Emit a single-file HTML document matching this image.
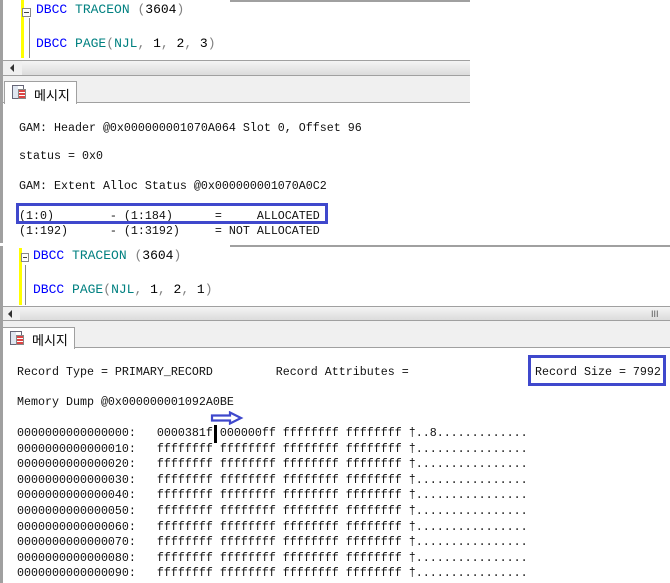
<!DOCTYPE html>
<html><head><meta charset="utf-8"><style>
*{margin:0;padding:0;box-sizing:border-box}
body{width:670px;height:583px;overflow:hidden;background:#fff;position:relative;font-family:"Liberation Mono",monospace}
.a{position:absolute;white-space:pre}
.code{font-size:13px;line-height:14px}
.b{color:#0000ff}.t{color:#008080}.g{color:#808080}
.r1{font-size:11.67px;line-height:13px;color:#111}
.r2{font-size:11.67px;line-height:13px;color:#111}
.tab{position:absolute;background:#fff;border:1px solid #a0a0a0;border-bottom:none;font-family:"Liberation Sans","Noto Sans CJK KR",sans-serif;font-size:13px}
.sb{position:absolute;background:linear-gradient(#f4f4f4,#dcdcdc);border-top:1px solid #a0a0a0;border-bottom:1px solid #a0a0a0}
.ico{position:absolute;width:12px;height:14px;border:1px solid #667;background:linear-gradient(90deg,#dfe6f0 50%,#fff 50%)}
.ico:after{content:"";position:absolute;right:-3px;bottom:-1px;width:6px;height:8px;background:repeating-linear-gradient(#d44 0 2px,#fff 2px 3px);border:1px solid #888}
</style></head><body>
<div class="a" style="left:0;top:0;width:3px;height:243px;background:#a0a0a0"></div>
<div class="a" style="left:230px;top:0;width:240px;height:2px;background:#a0a0a0"></div>
<div class="a" style="left:21px;top:0;width:3px;height:58px;background:#ffff00"></div>
<div class="a" style="left:29px;top:18px;width:1px;height:40px;background:#888"></div>
<div class="a" style="left:22px;top:8px;width:9px;height:9px;border:1px solid #888;background:#fff"></div>
<div class="a" style="left:24px;top:12px;width:5px;height:1px;background:#444"></div>
<div class="a code" style="left:36px;top:3px"><span class="b">DBCC</span> <span class="t">TRACEON</span> <span class="g">(</span>3604<span class="g">)</span></div>
<div class="a code" style="left:36px;top:37px"><span class="b">DBCC</span> <span class="t">PAGE</span><span class="g">(</span><span class="t">NJL</span><span class="g">,</span> 1<span class="g">,</span> 2<span class="g">,</span> 3<span class="g">)</span></div>
<div class="sb" style="left:3px;top:60px;width:467px;height:16px"></div>
<div class="a" style="left:3px;top:61px;width:19px;height:14px;background:#f0f0f0"></div>
<div class="a" style="left:10px;top:64px;width:0;height:0;border:4px solid transparent;border-right:4px solid #333;border-left:none"></div>
<div class="a" style="left:3px;top:76px;width:467px;height:27px;background:#f0f0f0;border-bottom:1px solid #a0a0a0"></div>
<div class="tab" style="left:4px;top:81px;width:73px;height:23px"><div class="ico" style="left:7px;top:3px"></div><span class="a" style="left:29px;top:3px">메시지</span></div>
<div class="a r1" style="left:19px;top:122px">GAM: Header @0x000000001070A064 Slot 0, Offset 96</div>
<div class="a r1" style="left:19px;top:150px">status = 0x0</div>
<div class="a r1" style="left:19px;top:180px">GAM: Extent Alloc Status @0x000000001070A0C2</div>
<div class="a r1" style="left:19px;top:210px">(1:0)        - (1:184)      =     ALLOCATED</div>
<div class="a r1" style="left:19px;top:225px">(1:192)      - (1:3192)     = NOT ALLOCATED</div>
<div class="a" style="left:16px;top:203px;width:312px;height:21px;border:3px solid #3f48cc"></div>
<div class="a" style="left:230px;top:245px;width:440px;height:2px;background:#a0a0a0"></div>
<div class="a" style="left:0;top:246px;width:3px;height:337px;background:#a0a0a0"></div>
<div class="a" style="left:19px;top:248px;width:3px;height:57px;background:#ffff00"></div>
<div class="a" style="left:25px;top:265px;width:1px;height:40px;background:#888"></div>
<div class="a" style="left:21px;top:253px;width:8px;height:9px;border:1px solid #888;background:#fff"></div>
<div class="a" style="left:23px;top:257px;width:4px;height:1px;background:#444"></div>
<div class="a code" style="left:33px;top:249px"><span class="b">DBCC</span> <span class="t">TRACEON</span> <span class="g">(</span>3604<span class="g">)</span></div>
<div class="a code" style="left:33px;top:283px"><span class="b">DBCC</span> <span class="t">PAGE</span><span class="g">(</span><span class="t">NJL</span><span class="g">,</span> 1<span class="g">,</span> 2<span class="g">,</span> 1<span class="g">)</span></div>
<div class="sb" style="left:3px;top:306px;width:667px;height:15px"></div>
<div class="a" style="left:3px;top:307px;width:17px;height:13px;background:#f0f0f0"></div>
<div class="a" style="left:8px;top:310px;width:0;height:0;border:4px solid transparent;border-right:4px solid #333;border-left:none"></div>
<div class="a" style="left:651px;top:309px;font-size:9px;color:#555;font-family:'Liberation Sans'">III</div>
<div class="a" style="left:3px;top:321px;width:667px;height:27px;background:#f0f0f0;border-bottom:1px solid #a0a0a0"></div>
<div class="tab" style="left:2px;top:327px;width:73px;height:22px"><div class="ico" style="left:7px;top:3px"></div><span class="a" style="left:29px;top:2px">메시지</span></div>
<div class="a r2" style="left:17px;top:366px">Record Type = PRIMARY_RECORD         Record Attributes =</div>
<div class="a r2" style="left:535px;top:366px">Record Size = 7992</div>
<div class="a" style="left:528px;top:355px;width:138px;height:31px;border:3px solid #3f48cc"></div>
<div class="a r2" style="left:17px;top:396px">Memory Dump @0x000000001092A0BE</div>
<svg class="a" style="left:210px;top:411px" width="34" height="14"><path d="M2 4.5H20V1.5L31 7 20 12.5V9.5H2Z" fill="#fff" stroke="#3f48cc" stroke-width="2.2"/></svg>
<div class="a" style="left:214px;top:425px;width:3px;height:18px;background:#000"></div>
<div class="a r2" style="left:17px;top:426px;line-height:15.6px">0000000000000000:   0000381f 000000ff ffffffff ffffffff †..8.............
0000000000000010:   ffffffff ffffffff ffffffff ffffffff †................
0000000000000020:   ffffffff ffffffff ffffffff ffffffff †................
0000000000000030:   ffffffff ffffffff ffffffff ffffffff †................
0000000000000040:   ffffffff ffffffff ffffffff ffffffff †................
0000000000000050:   ffffffff ffffffff ffffffff ffffffff †................
0000000000000060:   ffffffff ffffffff ffffffff ffffffff †................
0000000000000070:   ffffffff ffffffff ffffffff ffffffff †................
0000000000000080:   ffffffff ffffffff ffffffff ffffffff †................
0000000000000090:   ffffffff ffffffff ffffffff ffffffff †................</div>
</body></html>
